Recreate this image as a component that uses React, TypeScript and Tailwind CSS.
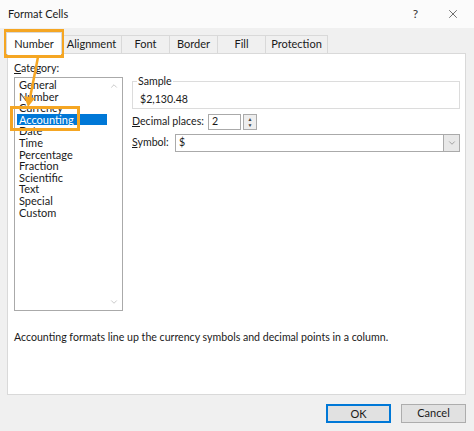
import { ChevronDown, ChevronUp, X } from "lucide-react";

const categories = [
  "General",
  "Number",
  "Currency",
  "Accounting",
  "Date",
  "Time",
  "Percentage",
  "Fraction",
  "Scientific",
  "Text",
  "Special",
  "Custom",
];

const tabs = [
  { label: "Number", w: "w-[56px]" },
  { label: "Alignment", w: "w-[60px]" },
  { label: "Font", w: "w-[48px]" },
  { label: "Border", w: "w-[48px]" },
  { label: "Fill", w: "w-[48px]" },
  { label: "Protection", w: "w-[62px]" },
];

export default function App() {
  return (
    <div className="relative h-[431px] w-[474px] overflow-hidden bg-[#f0f0f0] font-['Lato',sans-serif] text-[10.6px] text-[#1a1a1a]">
      {/* title bar */}
      <div className="flex h-[28px] items-center justify-between bg-[#fbfbfb] pl-[8px] pr-[14px]">
        <span className="text-[11px]">Format Cells</span>
        <div className="flex items-center gap-[28px]">
          <span className="text-[12px] text-[#333]">?</span>
          <X className="h-[14px] w-[14px] text-[#333]" strokeWidth={1.2} />
        </div>
      </div>

      {/* tabs */}
      <div className="flex h-[25px] items-end pl-[6px]">
        {tabs.map((t, i) =>
          i === 0 ? (
            <div
              key={t.label}
              className={`${t.w} relative z-10 -mb-px flex h-[22px] items-center justify-center border border-b-0 border-[#d9d9d9] bg-white pt-[2px] text-[11px]`}
            >
              {t.label}
            </div>
          ) : (
            <div
              key={t.label}
              className={`${t.w} flex h-[18px] items-center justify-center border border-b-0 border-l-0 border-[#d9d9d9] bg-[#f0f0f0] text-[11px]`}
            >
              {t.label}
            </div>
          ),
        )}
      </div>

      {/* pane */}
      <div className="ml-[7px] flex h-[342px] w-[459px] flex-col border border-[#d9d9d9] bg-white">
        <div className="flex pl-[6px] pt-[7px]">
          <div className="flex w-[109px] flex-col">
            <span className="leading-[14px]">
              <span className="underline">C</span>ategory:
            </span>
            <div className="relative mt-[2px] h-[234px] w-[109px] border border-[#aaa] bg-white pl-[2px] pt-[1px] text-[11px]">
              {categories.map((c) =>
                c === "Accounting" ? (
                  <div key={c} className="h-[11.6px] w-[90px] bg-[#0078d7] pl-[2px] leading-[11.6px] text-white">
                    {c}
                  </div>
                ) : (
                  <div key={c} className="h-[11.6px] pl-[2px] leading-[11.6px]">
                    {c}
                  </div>
                ),
              )}
              <ChevronUp className="absolute right-[3px] top-[3px] h-[10px] w-[10px] text-[#aaa]" strokeWidth={1.5} />
              <ChevronDown className="absolute bottom-[3px] right-[3px] h-[10px] w-[10px] text-[#aaa]" strokeWidth={1.5} />
            </div>
          </div>

          <div className="ml-[9px] flex w-[328px] flex-col">
            {/* sample */}
            <fieldset className="mt-[14px] h-[34px] border border-[#dcdcdc] px-[4px]">
              <legend className="px-[1px] leading-[12px]">Sample</legend>
              <div className="pl-[3px] pt-[5px] leading-[14px]">$2,130.48</div>
            </fieldset>

            <div className="mt-[5px] flex items-center">
              <span className="w-[76px] whitespace-nowrap">
                <span className="underline">D</span>ecimal places:
              </span>
              <div className="flex h-[16px] w-[33px] items-center border border-[#aaa] pl-[3px]">2</div>
              <div className="ml-[2px] flex h-[16px] w-[14px] flex-col items-center justify-center border border-[#aaa] bg-[#eee] text-[5px] leading-[6px] text-[#444]">
                <span>▲</span>
                <span>▼</span>
              </div>
            </div>

            <div className="mt-[4px] flex items-center">
              <span className="w-[43px]">
                <span className="underline">S</span>ymbol:
              </span>
              <div className="flex h-[18px] flex-1 items-center border border-[#aaa]">
                <span className="flex-1 pl-[3px]">$</span>
                <div className="flex h-full w-[16px] items-center justify-center border-l border-[#aaa] bg-[#e8e8e8]">
                  <ChevronDown className="h-[10px] w-[10px] text-[#777]" strokeWidth={1.5} />
                </div>
              </div>
            </div>
          </div>
        </div>

        <div className="mt-[19px] pl-[6px] leading-[14px]">
          Accounting formats line up the currency symbols and decimal points in a column.
        </div>
      </div>

      {/* footer */}
      <div className="flex justify-end gap-[10px] pr-[8px] pt-[9px]">
        <button className="h-[19px] w-[65px] border-2 border-[#0078d7] bg-[#e1e1e1] text-[11px]">OK</button>
        <button className="h-[19px] w-[65px] border border-[#adadad] bg-[#e1e1e1] text-[11px]">Cancel</button>
      </div>

      {/* annotations */}
      <div className="absolute left-[4px] top-[29px] h-[29px] w-[60px] border-[3px] border-[#f5a623]" />
      <div className="absolute left-[10px] top-[106px] h-[25px] w-[70px] border-[3px] border-[#f5a623]" />
      <svg className="absolute left-0 top-0" width="474" height="431">
        <line x1="38" y1="57" x2="30" y2="98" stroke="#f5a623" strokeWidth="2.5" />
        <polygon points="24,96 35,98 28,107" fill="#f5a623" />
      </svg>
    </div>
  );
}
